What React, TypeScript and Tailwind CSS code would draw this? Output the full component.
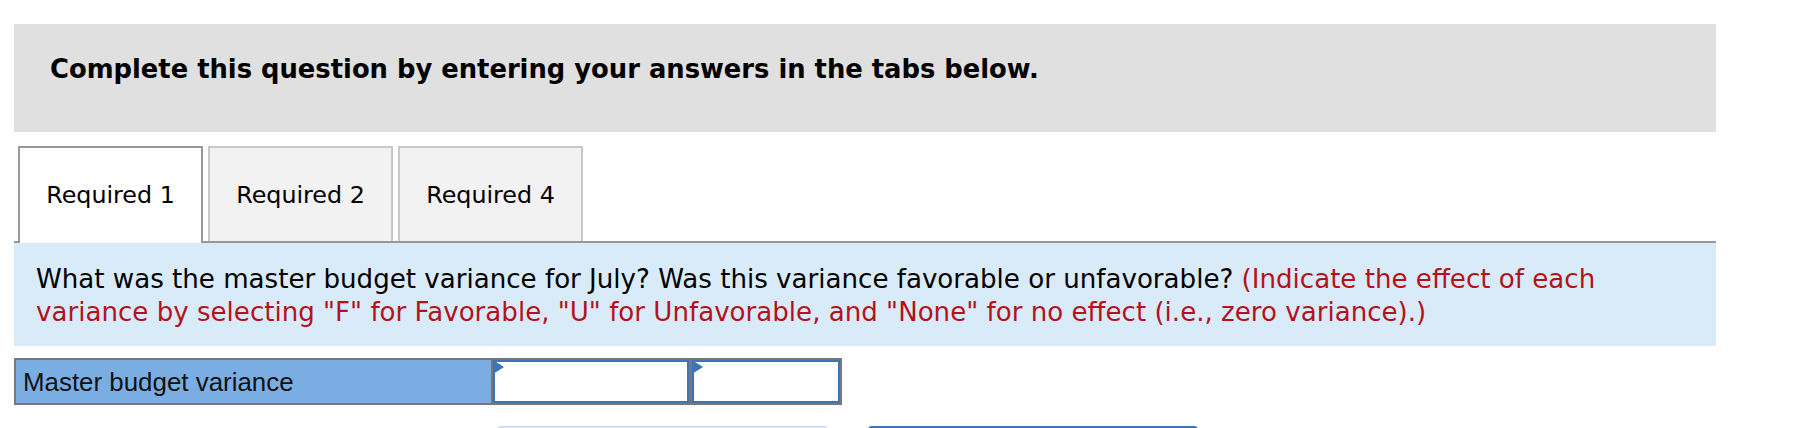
export default function App() {
  const tabs = ["Required 1", "Required 2", "Required 4"];

  return (
    <div className="min-h-screen bg-white pt-[24px] pl-[14px] font-['DejaVu_Sans',Verdana,sans-serif] text-black">
      <div className="w-[1702px]">
        {/* instructions banner */}
        <div className="h-[108px] bg-[#e0e0e0] pl-[36px] pt-[30px]">
          <h2 className="text-[25.8px] font-bold leading-[30px]">
            Complete this question by entering your answers in the tabs below.
          </h2>
        </div>

        {/* tabs */}
        <div className="mt-[14px] flex gap-[5px] border-b-2 border-[#999] pl-[4px]">
          {tabs.map((t, i) =>
            i === 0 ? (
              <div
                key={t}
                className="relative z-10 -mb-[2px] flex h-[97px] w-[185px] items-center justify-center border-2 border-b-0 border-[#999] bg-white text-[23.8px]"
              >
                {t}
              </div>
            ) : (
              <div
                key={t}
                className="flex h-[95px] w-[185px] items-center justify-center border-2 border-b-0 border-[#c8c8c8] bg-[#f2f2f2] pt-[2px] text-[23.8px]"
              >
                {t}
              </div>
            )
          )}
        </div>

        {/* question */}
        <div className="h-[103px] bg-[#d9ebf9] pl-[22px] pt-[20px] text-[26.1px] leading-[33px]">
          What was the master budget variance for July? Was this variance favorable or unfavorable?{" "}
          <span className="text-[#b5121b]">
            (Indicate the effect of each
            <br />
            variance by selecting "F" for Favorable, "U" for Unfavorable, and "None" for no effect (i.e., zero variance).)
          </span>
        </div>

        {/* answer row */}
        <div className="mt-[12px] flex h-[47px] w-[828px] gap-[2px] border-2 border-[#777] bg-[#777]">
          <div className="flex w-[475px] items-center bg-[#7aaee3] pt-[1px] pl-[7px] font-['Liberation_Sans',Arial,sans-serif] text-[25.9px] text-[#111]">
            Master budget variance
          </div>
          <AnswerCell className="w-[196px]" />
          <AnswerCell className="ml-[1px] w-[148px]" />
        </div>

        {/* buttons, cut off by the viewport */}
        <div className="mt-[21px] ml-[483px] flex gap-[40px]">
          <div className="h-[40px] w-[331px] rounded-t-[4px] border border-[#c9d8e8] bg-[#dde8f3]" />
          <div className="h-[40px] w-[330px] rounded-t-[4px] bg-[#3b74b9]" />
        </div>
      </div>
    </div>
  );
}

function AnswerCell({ className }: { className: string }) {
  return (
    <div className={`relative border-2 border-[#3b74b9] bg-white ${className}`}>
      <svg className="absolute -top-[2px] -left-[2px]" width="11" height="14" viewBox="0 0 11 14">
        <polygon points="0,0 11,7 0,14" fill="#3b74b9" />
      </svg>
    </div>
  );
}
